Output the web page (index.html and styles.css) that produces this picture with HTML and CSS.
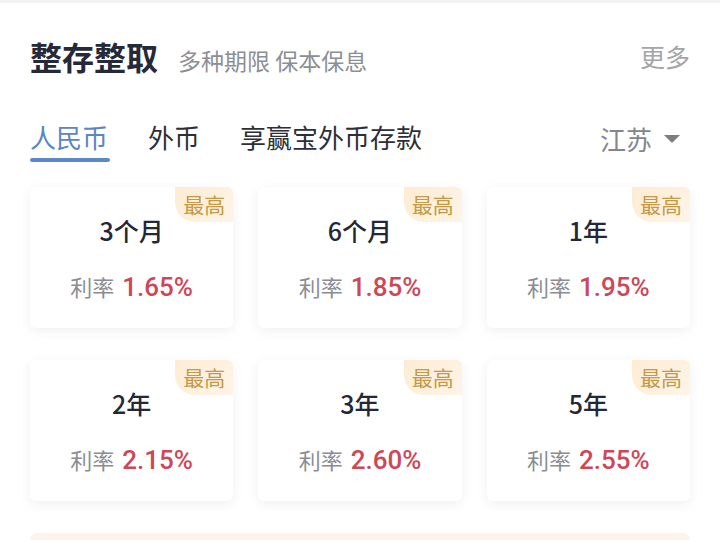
FILE: index.html
```html
<!DOCTYPE html>
<html lang="zh-CN">
<head>
<meta charset="utf-8">
<title>整存整取</title>
<link rel="stylesheet" href="styles.css">
</head>
<body>
<div class="page">
  <header class="head">
    <div class="head-left">
      <h1 class="title">整存整取</h1>
      <span class="subtitle">多种期限 保本保息</span>
    </div>
    <a class="more">更多</a>
  </header>

  <nav class="tabs">
    <div class="tab-list">
      <span class="tab active">人民币</span>
      <span class="tab">外币</span>
      <span class="tab">享赢宝外币存款</span>
    </div>
    <div class="region">江苏<span class="caret"></span></div>
  </nav>

  <section class="grid">
    <div class="card"><span class="badge">最高</span><div class="term">3个月</div><div class="rate"><span class="rate-label">利率</span><span class="rate-value">1.65%</span></div></div>
    <div class="card"><span class="badge">最高</span><div class="term">6个月</div><div class="rate"><span class="rate-label">利率</span><span class="rate-value">1.85%</span></div></div>
    <div class="card"><span class="badge">最高</span><div class="term">1年</div><div class="rate"><span class="rate-label">利率</span><span class="rate-value">1.95%</span></div></div>
    <div class="card"><span class="badge">最高</span><div class="term">2年</div><div class="rate"><span class="rate-label">利率</span><span class="rate-value">2.15%</span></div></div>
    <div class="card"><span class="badge">最高</span><div class="term">3年</div><div class="rate"><span class="rate-label">利率</span><span class="rate-value">2.60%</span></div></div>
    <div class="card"><span class="badge">最高</span><div class="term">5年</div><div class="rate"><span class="rate-label">利率</span><span class="rate-value">2.55%</span></div></div>
  </section>

  <div class="promo"></div>
</div>
</body>
</html>
```

FILE: styles.css
```css
* { box-sizing: border-box; }

html, body {
  margin: 0;
  background: #ffffff;
  overflow: hidden;
}

body {
  font-family: "Noto Sans CJK SC", "Noto Sans", sans-serif;
  color: #222533;
  height: 542px;
  border-top: 3px solid #f3f3f5;
}

.page {
  padding: 0 30px;
}

/* header */
.head {
  height: 102px;
  display: flex;
  align-items: center;
  justify-content: space-between;
  padding-top: 4px;
}

.head-left {
  display: flex;
  align-items: center;
  gap: 20px;
}

.title {
  margin: 0;
  font-size: 32px;
  line-height: 1;
  font-weight: 700;
  color: #262a38;
}

.subtitle {
  font-size: 23px;
  line-height: 1;
  color: #8c8e96;
  padding-top: 8px;
}

.more {
  font-size: 25px;
  line-height: 1;
  color: #a3a5ab;
}

/* tabs */
.tabs {
  display: flex;
  align-items: flex-start;
  justify-content: space-between;
  height: 82px;
}

.tab-list {
  display: flex;
  gap: 40px;
}

.tab {
  position: relative;
  font-size: 26px;
  line-height: 1;
  color: #2c2f38;
  padding-top: 19px;
  padding-bottom: 8px;
}

.tab.active {
  color: #5b85c3;
}

.tab.active::after {
  content: "";
  position: absolute;
  left: 0;
  right: -2px;
  bottom: -4px;
  height: 4px;
  border-radius: 2px;
  background: #5d88c8;
}

.region {
  display: flex;
  align-items: center;
  gap: 12px;
  font-size: 26px;
  line-height: 1;
  color: #84868d;
  padding-top: 21px;
  padding-right: 10px;
}

.caret {
  width: 0;
  height: 0;
  border-left: 8px solid transparent;
  border-right: 8px solid transparent;
  border-top: 8px solid #7b7d85;
}

/* rate cards */
.grid {
  display: grid;
  grid-template-columns: repeat(3, 1fr);
  column-gap: 25px;
  row-gap: 32px;
}

.card {
  position: relative;
  height: 141px;
  background: #ffffff;
  border-radius: 6px;
  box-shadow: 0 3px 12px rgba(30, 40, 70, 0.07);
  display: flex;
  flex-direction: column;
  align-items: center;
}

.badge {
  position: absolute;
  top: 0;
  right: 0;
  width: 58px;
  height: 35px;
  display: flex;
  align-items: center;
  justify-content: center;
  font-size: 21px;
  line-height: 1;
  color: #c49a46;
  background: linear-gradient(135deg, #fdecd4, #fef4e7);
  border-radius: 0 6px 0 20px;
}

.term {
  margin-top: 28px;
  font-size: 25px;
  line-height: 1.2;
  font-weight: 500;
  color: #242836;
}

.rate {
  margin-top: 25px;
  display: flex;
  align-items: baseline;
  gap: 8px;
}

.rate-label {
  font-size: 22px;
  color: #8a8c93;
}

.rate-value {
  font-family: Roboto, "Noto Sans", sans-serif;
  font-size: 26px;
  font-weight: 500;
  color: #cf4657;
}

/* top edge of the peach banner below the cards */
.promo {
  margin-top: 32px;
  height: 7px;
  border-radius: 8px 8px 0 0;
  background: #fdf3ea;
}
```
